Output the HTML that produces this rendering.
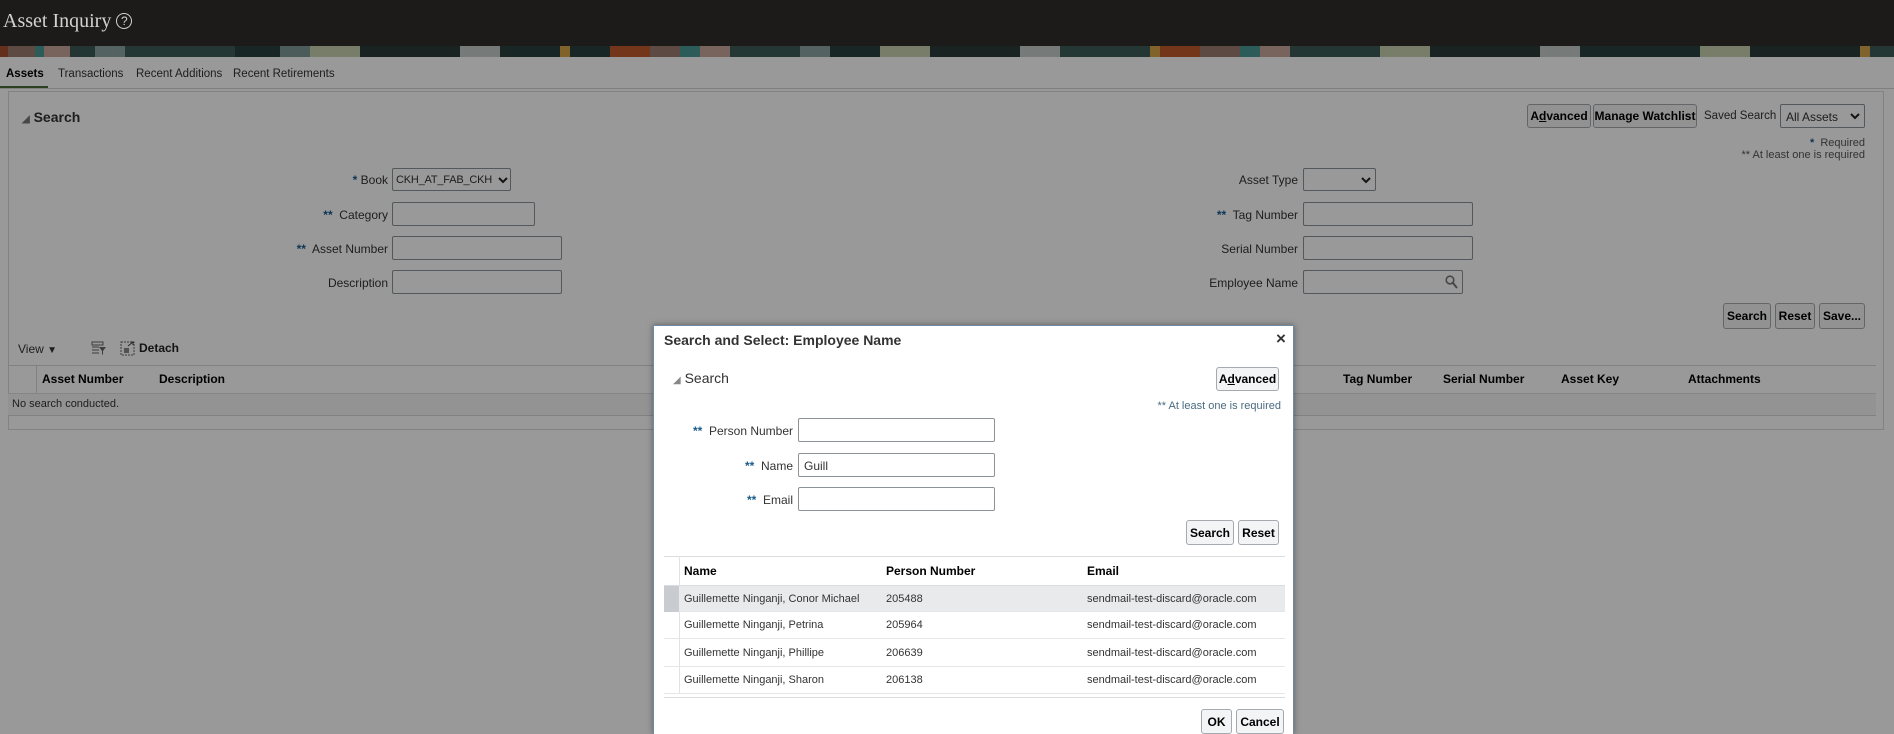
<!DOCTYPE html>
<html><head><meta charset="utf-8"><style>
*{box-sizing:border-box;margin:0;padding:0}
html{width:1894px;height:734px;overflow:hidden}
body{width:1894px;height:734px;position:relative;overflow:hidden;background:#fff;font-family:"Liberation Sans",sans-serif;font-size:12px;color:#333}
.a{position:absolute}
.hdr{left:0;top:0;width:1894px;height:46px;background:#1c1b19}
.ttl{left:3px;top:10px;font-family:"Liberation Serif",serif;font-size:20px;color:#d2d2d2}
.banner{left:0;top:46px;width:1894px;height:11px;background:linear-gradient(90deg,#a8502e 0,#a8502e 8px,#9a7c70 8px,#9a7c70 35px,#4a9a94 35px,#4a9a94 44px,#c8a59c 44px,#c8a59c 70px,#3b5b58 70px,#3b5b58 95px,#8ea3a3 95px,#8ea3a3 125px,#3d5c58 125px,#3d5c58 235px,#29413e 235px,#29413e 280px,#7f9a98 280px,#7f9a98 310px,#c9d0b0 310px,#c9d0b0 360px,#2a3b38 360px,#2a3b38 460px,#c5cbc9 460px,#c5cbc9 500px,#29413e 500px,#29413e 560px,#d4a548 560px,#d4a548 570px,#29413e 570px,#29413e 610px,#c25a2c 610px,#c25a2c 650px,#9a7c70 650px,#9a7c70 680px,#4a9a94 680px,#4a9a94 700px,#c8a59c 700px,#c8a59c 730px,#3d5c58 730px,#3d5c58 800px,#8ea3a3 800px,#8ea3a3 830px,#29413e 830px,#29413e 880px,#c9d0b0 880px,#c9d0b0 930px,#2a3b38 930px,#2a3b38 1020px,#c5cbc9 1020px,#c5cbc9 1060px,#3d5c58 1060px,#3d5c58 1150px,#d4a548 1150px,#d4a548 1160px,#c25a2c 1160px,#c25a2c 1200px,#9a7c70 1200px,#9a7c70 1240px,#4a9a94 1240px,#4a9a94 1260px,#c8a59c 1260px,#c8a59c 1290px,#3b5b58 1290px,#3b5b58 1380px,#c9d0b0 1380px,#c9d0b0 1430px,#2a3b38 1430px,#2a3b38 1540px,#c5cbc9 1540px,#c5cbc9 1580px,#29413e 1580px,#29413e 1700px,#c9d0b0 1700px,#c9d0b0 1750px,#2a3b38 1750px,#2a3b38 1860px,#d4a548 1860px,#d4a548 1870px,#3d5c58 1870px)}
.tab{top:68px;font-size:11.5px;color:#333}
.lbl{font-size:12px;color:#333;text-align:right}
.star{color:#1a5a8a;font-weight:bold}
.in{background:#fff;border:1px solid #8b9399;border-radius:2px}
.btn{background:#f3f4f5;border:1px solid #a4aab0;border-radius:3px;font-weight:bold;font-size:12px;color:#000;display:flex;align-items:center;justify-content:center}
.th{font-weight:bold;font-size:12px;color:#000}
.ov{left:0;top:46px;width:1894px;height:688px;background:rgba(0,0,0,0.4)}
.dlg{left:653px;top:325px;width:641px;height:409px;background:#fff;border:1px solid #6f8aa3;border-bottom:none;box-shadow:0 0 6px rgba(0,0,0,.4)}
.d{position:absolute}
.row{left:10px;width:621px;height:27px;border-bottom:1px solid #e4e6e8}
.cell{position:absolute;top:7px;font-size:11px;color:#333}
.chev{position:absolute;right:4px;top:7px}
</style></head><body>
<div class="a hdr"></div>
<div class="a ttl">Asset Inquiry <span style="display:inline-block;width:16px;height:16px;border:1px solid #d2d2d2;border-radius:50%;text-align:center;line-height:14px;font-size:12px;vertical-align:2px;font-family:'Liberation Sans'">?</span></div>
<div class="a banner"></div>

<div class="a tab" style="left:6px;font-weight:bold;color:#000">Assets</div>
<div class="a" style="left:0;top:86px;width:48px;height:2px;background:#4a6a3a"></div>
<div class="a tab" style="left:58px">Transactions</div>
<div class="a tab" style="left:136px">Recent Additions</div>
<div class="a tab" style="left:233px">Recent Retirements</div>
<div class="a" style="left:0;top:88px;width:1894px;height:1px;background:#d4d4d4"></div>

<div class="a" style="left:8px;top:91px;width:1876px;height:339px;border:1px solid #d6dadd"></div>
<div class="a" style="left:22px;top:109px;font-size:14px;font-weight:bold;color:#333"><span style="font-size:10px;color:#777">◢</span> Search</div>

<div class="a btn" style="left:1527px;top:104px;width:64px;height:24px"><span>A<u>d</u>vanced</span></div>
<div class="a btn" style="left:1593px;top:104px;width:104px;height:24px">Manage Watchlist</div>
<div class="a" style="left:1704px;top:110px;color:#333;font-size:11.5px">Saved Search</div>
<div class="a in" style="left:1780px;top:104px;width:85px;height:24px;padding:5px 5px;font-size:12px">All Assets<svg class="chev" width="10" height="8" viewBox="0 0 10 8"><path d="M1 2l4 4 4-4" stroke="#222" stroke-width="2" fill="none"/></svg></div>
<div class="a" style="left:1700px;top:137px;width:165px;text-align:right;font-size:11px;color:#555"><span class="star">*</span>&nbsp; Required<br>** At least one is required</div>

<div class="a lbl" style="left:200px;top:173px;width:188px"><span class="star">*</span> Book</div>
<div class="a in" style="left:392px;top:168px;width:119px;height:23px;padding:5px 3px;font-size:11px;overflow:hidden;white-space:nowrap;letter-spacing:-0.2px">CKH_AT_FAB_CKH<svg class="chev" style="background:#fff;right:2px" width="10" height="8" viewBox="0 0 10 8"><path d="M1 2l4 4 4-4" stroke="#222" stroke-width="2" fill="none"/></svg></div>
<div class="a lbl" style="left:200px;top:208px;width:188px"><span class="star">**</span>&nbsp; Category</div>
<div class="a in" style="left:392px;top:202px;width:143px;height:24px"></div>
<div class="a lbl" style="left:200px;top:242px;width:188px"><span class="star">**</span>&nbsp; Asset Number</div>
<div class="a in" style="left:392px;top:236px;width:170px;height:24px"></div>
<div class="a lbl" style="left:200px;top:276px;width:188px">Description</div>
<div class="a in" style="left:392px;top:270px;width:170px;height:24px"></div>

<div class="a lbl" style="left:1110px;top:173px;width:188px">Asset Type</div>
<div class="a in" style="left:1303px;top:168px;width:73px;height:23px"><svg class="chev" width="10" height="8" viewBox="0 0 10 8"><path d="M1 2l4 4 4-4" stroke="#222" stroke-width="2" fill="none"/></svg></div>
<div class="a lbl" style="left:1110px;top:208px;width:188px"><span class="star">**</span>&nbsp; Tag Number</div>
<div class="a in" style="left:1303px;top:202px;width:170px;height:24px"></div>
<div class="a lbl" style="left:1110px;top:242px;width:188px">Serial Number</div>
<div class="a in" style="left:1303px;top:236px;width:170px;height:24px"></div>
<div class="a lbl" style="left:1110px;top:276px;width:188px">Employee Name</div>
<div class="a in" style="left:1303px;top:270px;width:160px;height:24px"><svg style="position:absolute;right:4px;top:4px" width="13" height="14" viewBox="0 0 13 14"><circle cx="5" cy="5" r="3.8" fill="none" stroke="#777" stroke-width="1.6"/><path d="M8 8l4 5" stroke="#777" stroke-width="2"/></svg></div>

<div class="a btn" style="left:1723px;top:303px;width:48px;height:26px">Search</div>
<div class="a btn" style="left:1775px;top:303px;width:40px;height:26px">Reset</div>
<div class="a btn" style="left:1819px;top:303px;width:46px;height:26px">Save...</div>

<div class="a" style="left:18px;top:342px;color:#333">View <span style="font-size:10px">▼</span></div>
<svg class="a" style="left:91px;top:340px" width="16" height="16" viewBox="0 0 16 16"><path d="M1 2h11v3H1zM1 7h7M1 10h7M1 13h7" stroke="#666" fill="none"/><path d="M8 7h7l-3 4v4l-1-1v-3z" fill="#666"/></svg>
<svg class="a" style="left:120px;top:340px" width="15" height="16" viewBox="0 0 15 16"><rect x="1" y="2" width="13" height="13" fill="none" stroke="#666" stroke-dasharray="2 1"/><rect x="4" y="8" width="5" height="5" fill="#888"/><path d="M8 6l5-4M10 2h3v3" stroke="#444" fill="none"/></svg>
<div class="a" style="left:139px;top:341px;font-weight:bold;color:#222">Detach</div>

<div class="a" style="left:8px;top:365px;width:1868px;height:1px;background:#d6d8da"></div>
<div class="a" style="left:36px;top:365px;width:1px;height:28px;background:#d6d8da"></div>
<div class="a th" style="left:42px;top:372px">Asset Number</div>
<div class="a th" style="left:159px;top:372px">Description</div>
<div class="a th" style="left:1343px;top:372px">Tag Number</div>
<div class="a th" style="left:1443px;top:372px">Serial Number</div>
<div class="a th" style="left:1561px;top:372px">Asset Key</div>
<div class="a th" style="left:1688px;top:372px">Attachments</div>
<div class="a" style="left:8px;top:393px;width:1868px;height:23px;background:#f5f6f7;border-top:1px solid #dde0e2;border-bottom:1px solid #d6d8da"></div>
<div class="a" style="left:12px;top:398px;font-size:11px;color:#333">No search conducted.</div>

<div class="a ov"></div>

<div class="a dlg">
 <div class="d" style="left:10px;top:6px;font-size:14px;font-weight:bold;color:#333">Search and Select: Employee Name</div>
 <div class="d" style="left:622px;top:3px;font-size:17px;font-weight:bold;color:#333">×</div>
 <div class="d" style="left:19px;top:44px;font-size:14px;color:#333"><span style="font-size:10px;color:#888">◢</span> Search</div>
 <div class="d btn" style="left:562px;top:41px;width:63px;height:24px"><span>A<u>d</u>vanced</span></div>
 <div class="d" style="left:400px;top:74px;width:227px;text-align:right;font-size:11px;color:#4a6b80">** At least one is required</div>
 <div class="d lbl" style="left:0;top:98px;width:139px"><span class="star">**</span>&nbsp; Person Number</div>
 <div class="d in" style="left:144px;top:92px;width:197px;height:24px"></div>
 <div class="d lbl" style="left:0;top:133px;width:139px"><span class="star">**</span>&nbsp; Name</div>
 <div class="d in" style="left:144px;top:127px;width:197px;height:24px;padding:5px 5px;font-size:12px">Guill</div>
 <div class="d lbl" style="left:0;top:167px;width:139px"><span class="star">**</span>&nbsp; Email</div>
 <div class="d in" style="left:144px;top:161px;width:197px;height:24px"></div>
 <div class="d btn" style="left:532px;top:194px;width:48px;height:25px">Search</div>
 <div class="d btn" style="left:584px;top:194px;width:41px;height:25px">Reset</div>
 <div class="d" style="left:10px;top:230px;width:621px;height:1px;background:#d9dde0"></div>
 <div class="d" style="left:25px;top:230px;width:1px;height:138px;background:#e0e2e4"></div>
 <div class="d th" style="left:30px;top:238px">Name</div>
 <div class="d th" style="left:232px;top:238px">Person Number</div>
 <div class="d th" style="left:433px;top:238px">Email</div>
 <div class="d row" style="top:259px;background:#e9eaeb;border-top:1px solid #d9dde0"><div style="position:absolute;left:0;top:0;width:15px;height:26px;background:#c8ccd0"></div><div class="cell" style="left:20px">Guillemette Ninganji, Conor Michael</div><div class="cell" style="left:222px">205488</div><div class="cell" style="left:423px">sendmail-test-discard@oracle.com</div></div>
 <div class="d row" style="top:286px"><div class="cell" style="left:20px">Guillemette Ninganji, Petrina</div><div class="cell" style="left:222px">205964</div><div class="cell" style="left:423px">sendmail-test-discard@oracle.com</div></div>
 <div class="d row" style="top:314px"><div class="cell" style="left:20px">Guillemette Ninganji, Phillipe</div><div class="cell" style="left:222px">206639</div><div class="cell" style="left:423px">sendmail-test-discard@oracle.com</div></div>
 <div class="d row" style="top:341px"><div class="cell" style="left:20px">Guillemette Ninganji, Sharon</div><div class="cell" style="left:222px">206138</div><div class="cell" style="left:423px">sendmail-test-discard@oracle.com</div></div>
 <div class="d" style="left:10px;top:371px;width:621px;height:1px;background:#d9dde0"></div>
 <div class="d btn" style="left:547px;top:383px;width:31px;height:25px">OK</div>
 <div class="d btn" style="left:582px;top:383px;width:48px;height:25px">Cancel</div>
</div>
</body></html>
